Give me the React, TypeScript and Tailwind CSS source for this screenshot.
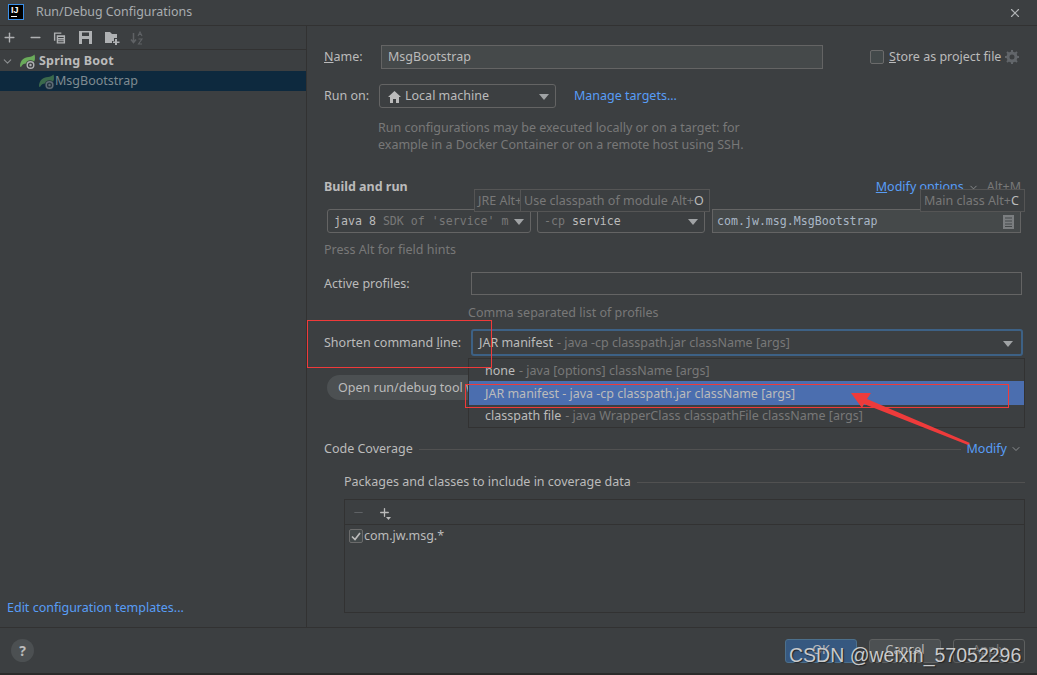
import { ChevronDown, Minus, Plus, X } from 'lucide-react';

const sans = 'font-["Noto_Sans",sans-serif]';
const mono = 'font-["DejaVu_Sans_Mono",monospace]';

function Caret({ className = '' }: { className?: string }) {
  return (
    <svg width="10" height="6" viewBox="0 0 10 6" className={className}>
      <path d="M0 0h10L5 6z" fill="#a0a3a5" />
    </svg>
  );
}

function SpringIcon({ dim = false }: { dim?: boolean }) {
  return (
    <svg width="16" height="16" viewBox="0 0 16 16" className={dim ? 'opacity-50' : ''}>
      <path d="M0 12.500C0 6.500 4 3 9 3c2 0 4-1 5.500-2.500 1 3.500.5 6.500-1.500 9H6c-2 0-4 1-5 3.500z" fill="#6aab5a" />
      <circle cx="10.500" cy="11" r="4.800" fill="#3c3f41" />
      <circle cx="10.500" cy="11" r="3.300" fill="none" stroke="#afb1b3" strokeWidth="1.400" />
      <circle cx="10.500" cy="11" r="1.200" fill="#afb1b3" />
    </svg>
  );
}

function ToolbarIcons() {
  return (
    <div className="flex h-6 items-center border-b border-[#323232] text-[#afb1b3]">
      <Plus size={15} strokeWidth={2.2} className="ml-[2px]" />
      <Minus size={15} strokeWidth={2.2} className="ml-[11px]" />
      <svg width="13" height="14" viewBox="0 0 14 14" className="ml-[10px]" fill="#afb1b3">
        <path d="M1 1h8v1.500H2.500V10H1z" />
        <path d="M4 4h9v9H4zm1.500 2v1h6V6zm0 2.500v1h6v-1zm0 2v1h6v-1z" fillRule="evenodd" />
      </svg>
      <svg width="13" height="13" viewBox="0 0 13 13" className="ml-[13px]" fill="#afb1b3">
        <path d="M0 0h13v13H0zM3 1.500v3.500h7V1.500zM3 8v5h7V8z" fillRule="evenodd" />
      </svg>
      <svg width="15" height="14" viewBox="0 0 15 14" className="ml-[13px]" fill="#afb1b3">
        <path d="M0 1h5l2 2h5v4H9v3H7v2H0z" />
        <path d="M10 8h2v2.500h2.500v1.500H12v2h-2v-2H8v-1.500h2z" />
      </svg>
      <svg width="14" height="14" viewBox="0 0 14 14" className="ml-[10px]">
        <path d="M3.500 2v9M1 8.500l2.500 3 2.500-3" fill="none" stroke="#5f6265" strokeWidth="1.500" />
        <path d="M8 5l2-4 2 4M8.800 3.500h2.400M8.500 8h3.500l-3.500 5h3.500" fill="none" stroke="#5f6265" strokeWidth="1.100" />
      </svg>
    </div>
  );
}

function Sidebar() {
  return (
    <aside className="flex w-[307px] shrink-0 flex-col border-r border-[#323232]">
      <ToolbarIcons />
      <div className="mt-px flex h-5 items-center pt-px font-bold text-[#bbbbbb]">
        <ChevronDown size={13} className="ml-[1px] text-[#8c8f91]" />
        <span className="ml-[6px] flex"><SpringIcon /></span>
        <span className="ml-[3px] tracking-[0.2px]">Spring Boot</span>
      </div>
      <div className="flex h-5 items-center bg-[#0d293e] pt-px pl-[39px] text-[#7f8b91]">
        <SpringIcon dim />
        <span>MsgBootstrap</span>
      </div>
      <div className="mt-auto mb-[9px] pl-[7px] text-[#589df6]">Edit configuration templates...</div>
    </aside>
  );
}

function RunConfigForm() {
  return (
    <main className="flex min-w-0 flex-1 flex-col pl-[17px] text-[#bbbbbb]">
      <div className="mt-[19px] flex h-6 items-center">
        <span className="w-[57px]"><u>N</u>ame:</span>
        <div className="flex h-6 w-[442px] items-center border border-[#646464] bg-[#45494a] pl-[6px]">MsgBootstrap</div>
        <span className="ml-[47px] h-[14px] w-[14px] rounded-[2px] border border-[#6b6b6b] bg-[#43494a]" />
        <span className="ml-[5px]"><u>S</u>tore as project file</span>
        <svg width="14" height="14" viewBox="0 0 14 14" className="ml-[4px]">
          <circle cx="7" cy="7" r="4" fill="none" stroke="#62666a" strokeWidth="3" />
          <path d="M7 0v3M7 11v3M0 7h3M11 7h3M2 2l2 2M10 10l2 2M2 12l2-2M10 4l2-2" stroke="#62666a" strokeWidth="2" />
        </svg>
      </div>

      <div className="mt-[15px] flex h-6 items-center pt-px">
        <span className="w-[55px]">Run on:</span>
        <div className="-mt-px flex h-6 w-[177px] items-center rounded-[3px] border border-[#646464] pt-px pr-[6px] pl-[8px]">
          <svg width="13" height="12" viewBox="0 0 13 12" fill="#bbbbbb"><path d="M6.500 0L13 6h-2v6H8V8H5v4H2V6H0z" /></svg>
          <span className="ml-[4px]">Local machine</span>
          <Caret className="ml-auto" />
        </div>
        <span className="ml-[18px] text-[#589df6]">Manage targets...</span>
      </div>

      <div className="mt-[11px] ml-[54px] leading-[17px] text-[#787878]">
        <div>Run configurations may be executed locally or on a target: for</div>
        <div>example in a Docker Container or on a remote host using SSH.</div>
      </div>

      <div className="mt-[24px] flex h-5 items-center justify-between pr-[16px]">
        <span className="font-bold">Build and run</span>
        <span className="text-[#787878]">
          <span className="text-[#589df6]"><u>M</u>odify options</span>
          <ChevronDown size={11} className="mr-[8px] ml-[4px] inline text-[#8c8f91]" />
          Alt+M
        </span>
      </div>

      <div className={`mt-[12px] flex h-6 gap-[6px] pl-[3px] ${mono} text-[11.6px]`}>
        <div className="flex w-[204px] items-center overflow-hidden rounded-[3px] border border-[#646464] px-[6px] pt-px">
          <span className="whitespace-nowrap">java 8 <span className="text-[#787878]">SDK of 'service' m</span></span>
          <Caret className="ml-auto shrink-0" />
        </div>
        <div className="flex w-[168px] items-center rounded-[3px] border border-[#646464] px-[6px] pt-px">
          <span className="text-[#787878]">-cp</span>
          <span className="ml-[7px]">service</span>
          <Caret className="ml-auto" />
        </div>
        <div className="ml-[1px] flex w-[309px] items-center border border-[#646464] bg-[#45494a] pt-px pr-[6px] pl-[4px] text-[#a9b7c6]">
          com.jw.msg.MsgBootstrap
          <svg width="11" height="14" viewBox="0 0 11 14" className="ml-auto">
            <rect width="11" height="14" fill="#7b7e80" />
            <path d="M2 3h7M2 6h7M2 9h7M2 11.500h7" stroke="#45494a" />
          </svg>
        </div>
      </div>

      <div className="mt-[8px] flex h-[18px] items-center text-[#787878]">Press Alt for field hints</div>

      <div className="mt-[13px] flex h-[23px] items-center">
        <span className="w-[147px] pt-[2px]">Active profiles:</span>
        <div className="h-[23px] w-[551px] border border-[#646464]" />
      </div>

      <div className="mt-[9px] ml-[144px] flex h-[18px] items-center text-[#787878]">Comma separated list of profiles</div>

      <div className="mt-[7px] flex h-[27px] items-center">
        <span className="w-[147px] pt-[2px]">Shorten command <u>l</u>ine:</span>
        <div className="flex h-[27px] w-[552px] items-center rounded-[3px] border-2 border-[#3d6185] pt-[2px] pr-[8px] pl-[6px]">
          JAR manifest<span className="ml-[4px] text-[#787878]">- java -cp classpath.jar className [args]</span>
          <Caret className="ml-auto" />
        </div>
      </div>

      <div className="mt-[19px] ml-[3px] flex h-[25px] w-[180px] items-center rounded-full bg-[#4c5052] pt-[2px] pl-[11px] whitespace-nowrap">Open run/debug tool window</div>

      <div className="mt-[39px] flex h-5 items-center pr-[15px]">
        <span>Code Coverage</span>
        <span className="mx-[6px] h-px flex-1 bg-[#515151]" />
        <span className="text-[#589df6]">Modify</span>
        <ChevronDown size={12} className="ml-[3px] text-[#8c8f91]" />
      </div>

      <div className="mt-[13px] ml-[20px] flex h-5 items-center pr-[12px]">
        <span>Packages and classes to include in coverage data</span>
        <span className="ml-[6px] h-px flex-1 bg-[#515151]" />
      </div>

      <div className="mt-[7px] ml-[20px] h-[114px] w-[681px] border border-[#323232]">
        <div className="flex h-[25px] items-center border-b border-[#323232] pl-[7px]">
          <Minus size={13} className="text-[#5f6265]" />
          <span className="relative ml-[13px] flex text-[#bbbbbb]">
            <Plus size={13} strokeWidth={2.4} />
            <svg width="5" height="3" viewBox="0 0 5 3" className="absolute top-[11px] left-[8px]"><path d="M0 0h5L2.500 3z" fill="#bbbbbb" /></svg>
          </span>
        </div>
        <div className="mt-[4px] flex h-[14px] items-center pl-[4px]">
          <span className="flex h-[14px] w-[14px] items-center justify-center rounded-[2px] border border-[#6b6b6b] bg-[#43494a]">
            <svg width="10" height="9" viewBox="0 0 10 9"><path d="M1 4.500L4 7.500 9 1" fill="none" stroke="#bbbbbb" strokeWidth="1.700" /></svg>
          </span>
          <span className="ml-[1px]">com.jw.msg.*</span>
        </div>
      </div>
    </main>
  );
}

function Footer() {
  return (
    <footer className="flex h-[46px] items-center border-t border-[#323232] pr-[12px] pl-[11px] text-[#bbbbbb]">
      <span className="flex h-[23px] w-[23px] items-center justify-center rounded-full bg-[#4c5052] text-[14px] font-bold text-[#bbbbbb]">?</span>
      <button className="ml-auto h-6 w-[72px] rounded-[3px] border border-[#4c708c] bg-[#365880]">OK</button>
      <button className="ml-[12px] h-6 w-[72px] rounded-[3px] border border-[#5e6060] bg-[#4c5052]">Cancel</button>
      <button className="ml-[12px] h-6 w-[72px] rounded-[3px] border border-[#5e6060] text-[#787878]">Apply</button>
    </footer>
  );
}

// hover hints and the combo popup, they lie over the form
function Overlays() {
  const hint = 'absolute top-[189px] flex h-[23px] items-center overflow-hidden whitespace-nowrap border border-[#555555] bg-[#3c3f41] pt-[2px] pl-[3px] text-[#787878]';
  return (
    <>
      <div className={`${hint} left-[474px] w-[47px]`}>JRE Alt+J</div>
      <div className={`${hint} left-[520px] w-[190px]`}>Use classpath of module Alt+<span className="text-[#bbbbbb]">O</span></div>
      <div className={`${hint} left-[920px] w-[105px]`}>Main class Alt+<span className="text-[#bbbbbb]">C</span></div>

      <div className="absolute top-[358px] left-[468px] flex h-[70px] w-[557px] flex-col border border-[#323232] bg-[#3c3f41] text-[#bbbbbb]">
        <div className="flex h-[23px] items-center pt-[2px] pl-[16px]">none<span className="ml-[4px] text-[#787878]">- java [options] className [args]</span></div>
        <div className="flex h-[24px] items-center bg-[#4b6eaf] pt-[2px] pl-[16px]">JAR manifest - java -cp classpath.jar className [args]</div>
        <div className="flex h-[23px] items-center pt-[2px] pl-[16px]">classpath file<span className="ml-[4px] text-[#787878]">- java WrapperClass classpathFile className [args]</span></div>
      </div>

      <div className="absolute top-[320px] left-[307px] h-[48px] w-[185px] border border-[#f03a3a]" />
      <div className="absolute top-[384px] left-[465px] h-[24px] w-[544px] border border-[#f03a3a]" />
      <svg width="130" height="60" viewBox="0 0 130 60" className="absolute top-[390px] left-[845px]">
        <path d="M6 3L26 3 22 9 125 53 123 55 19 14 17 18z" fill="#ee3b3b" />
      </svg>

      <div className="absolute top-[642px] left-[789px] font-['Liberation_Sans',sans-serif] text-[19.500px] leading-[26px] whitespace-nowrap text-[#c8cacc] [text-shadow:1px_1px_1px_#222]">
        CSDN @weixin_57052296
      </div>
    </>
  );
}

export default function App() {
  return (
    <div className={`relative flex h-[675px] w-[1037px] flex-col overflow-hidden bg-[#3c3f41] text-[12.500px] ${sans}`}>
      <header className="flex h-[26px] shrink-0 items-center border-b border-[#323232] pr-[15px] pl-[8px] text-[12.400px] text-[#a9adb0]">
        <span className="relative -mt-[2px] h-4 w-4 border border-[#3b8fe8] bg-black font-['Liberation_Sans',sans-serif] text-[9px] leading-[9px] font-bold text-white">
          <span className="absolute top-[1px] left-[2px]">IJ</span>
          <span className="absolute bottom-[2px] left-[2px] h-px w-[6px] bg-white" />
        </span>
        <span className="ml-[12px]">Run/Debug Configurations</span>
        <X size={14} className="ml-auto text-[#b0b3b5]" />
      </header>
      <div className="flex min-h-0 flex-1">
        <Sidebar />
        <RunConfigForm />
      </div>
      <Footer />
      <div className="h-[2px] shrink-0 bg-[#2b2b2b]" />
      <Overlays />
    </div>
  );
}
